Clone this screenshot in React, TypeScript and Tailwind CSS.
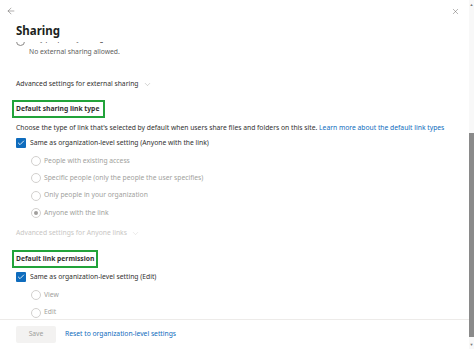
import { ArrowLeft, X, ChevronDown, Check } from 'lucide-react'

const FONT = { fontFamily: '"Segoe UI", "Noto Sans", "Open Sans", sans-serif' }

function Radio({ label, checked = false }: { label: string; checked?: boolean }) {
  return (
    <div className="flex items-center gap-[3px] h-[17.33px]">
      <span className="w-[10px] h-[10px] rounded-full border border-[#d2d0ce] flex items-center justify-center shrink-0">
        {checked && <span className="w-[4px] h-[4px] rounded-full bg-[#a19f9d]" />}
      </span>
      <span className="text-[#a19f9d] whitespace-nowrap">{label}</span>
    </div>
  )
}

function CheckRow({ label }: { label: string }) {
  return (
    <div className="flex items-center gap-[4px] h-[12px]">
      <span className="w-[10px] h-[10px] rounded-[1px] bg-[#0f6cbd] flex items-center justify-center shrink-0">
        <Check size={8} strokeWidth={2.5} className="text-white" />
      </span>
      <span className="text-[#323130] whitespace-nowrap">{label}</span>
    </div>
  )
}

export default function App() {
  return (
    <div className="w-[474px] h-[349px] bg-white flex overflow-hidden text-[6.75px] leading-none" style={FONT}>
      <div className="flex-1 flex flex-col min-w-0">
        {/* header */}
        <div className="h-[42px] shrink-0 flex flex-col">
          <div className="flex items-center justify-between pl-[6px] pr-[9px] pt-[6px]">
            <ArrowLeft size={10} strokeWidth={1.2} className="text-[#605e5c]" />
            <X size={9} strokeWidth={1.2} className="text-[#605e5c]" />
          </div>
          <h1 className="pl-[16px] mt-[9px] text-[11.5px] font-bold text-[#201f1e]">Sharing</h1>
        </div>

        {/* scroll area, previous option partly scrolled out of view */}
        <div className="flex-1 overflow-hidden">
          <div className="-mt-[8px] pl-[16px] pr-[8px]">
            <div className="flex items-center gap-[4px] h-[10px]">
              <span className="w-[9px] h-[9px] rounded-full border border-[#8a8886] shrink-0 translate-y-[2px]" />
              <span className="text-[#323130] whitespace-nowrap">Only people in your organization</span>
            </div>
            <p className="pl-[13px] mt-[3px] h-[10px] flex items-center text-[#605e5c]">No external sharing allowed.</p>

            <div className="flex items-center gap-[4px] mt-[22px] h-[10px] text-[#323130]">
              <span>Advanced settings for external sharing</span>
              <ChevronDown size={9} strokeWidth={1} className="text-[#8a8886]" />
            </div>

            <div className="mt-[11px] -ml-[4px] w-[93px] h-[18px] border-[2.5px] border-[#22a33a] flex items-center pl-[2px]">
              <span className="font-bold text-[#323130] whitespace-nowrap">Default sharing link type</span>
            </div>

            <p className="mt-[5px] h-[10px] flex items-center text-[#323130] whitespace-nowrap">
              Choose the type of link that's selected by default when users share files and folders on this site.&nbsp;
              <span className="text-[#0f6cbd]">Learn more about the default link types</span>
            </p>

            <div className="mt-[4px]">
              <CheckRow label="Same as organization-level setting (Anyone with the link)" />
            </div>
            <div className="pl-[15px] mt-[3.3px]">
              <Radio label="People with existing access" />
              <Radio label="Specific people (only the people the user specifies)" />
              <Radio label="Only people in your organization" />
              <Radio label="Anyone with the link" checked />
            </div>

            <div className="flex items-center gap-[4px] mt-[6.7px] h-[10px] text-[#c8c6c4]">
              <span>Advanced settings for Anyone links</span>
              <ChevronDown size={9} strokeWidth={1} />
            </div>

            <div className="mt-[12px] -ml-[4px] w-[86px] h-[18px] border-[2.5px] border-[#22a33a] flex items-center pl-[2px]">
              <span className="font-bold text-[#323130] whitespace-nowrap">Default link permission</span>
            </div>

            <div className="mt-[3px]">
              <CheckRow label="Same as organization-level setting (Edit)" />
            </div>
            <div className="pl-[15px] mt-[3.3px]">
              <Radio label="View" />
              <Radio label="Edit" />
            </div>
          </div>
        </div>

        {/* footer */}
        <div className="border-t border-[#edebe9] h-[30px] flex items-center gap-[9px] pl-[16px] shrink-0">
          <button className="w-[40px] h-[17px] bg-[#f3f2f1] text-[#a19f9d] rounded-[2px]">Save</button>
          <span className="text-[#0f6cbd]">Reset to organization-level settings</span>
        </div>
      </div>

      {/* scrollbar */}
      <div className="w-[5px] flex flex-col items-center bg-[#f8f8f8]">
        <span className="text-[4px] leading-none text-[#777] mt-[3px]">▲</span>
        <div className="flex-1 w-full flex flex-col pt-[126px] pb-[6px]">
          <div className="flex-1 bg-[#8a8a8a]" />
        </div>
        <span className="text-[4px] leading-none text-[#777] mb-[2px]">▼</span>
      </div>
    </div>
  )
}
